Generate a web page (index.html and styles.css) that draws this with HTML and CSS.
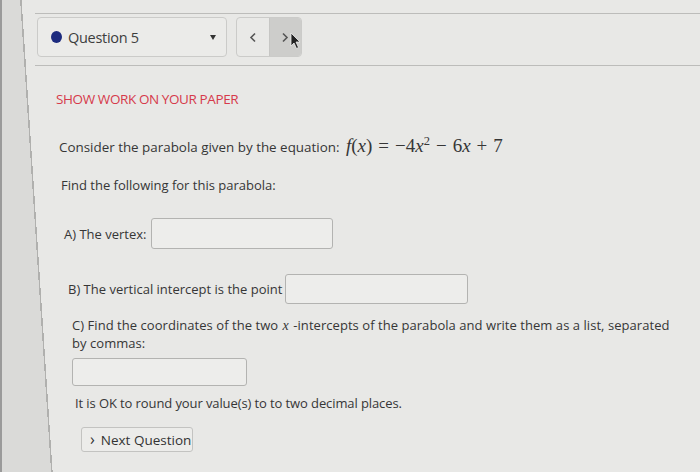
FILE: index.html
```html
<!DOCTYPE html>
<html>
<head>
<meta charset="utf-8">
<link rel="stylesheet" href="styles.css">
</head>
<body>
<div class="page">
  <div class="rule rule-top"></div>
  <div class="toolbar">
    <div class="select">
      <span class="dot"></span>
      <span class="qlabel">Question 5</span>
      <span class="caret"></span>
    </div>
    <div class="nav">
      <div class="navbtn">
        <svg width="8" height="11" viewBox="0 0 8 11"><path d="M6 1.5 L2 5.5 L6 9.5" fill="none" stroke="#555" stroke-width="1.6"/></svg>
      </div>
      <div class="navbtn hover">
        <svg width="8" height="11" viewBox="0 0 8 11"><path d="M2 1.5 L6 5.5 L2 9.5" fill="none" stroke="#555" stroke-width="1.6"/></svg>
        <svg class="cursor" width="12" height="18" viewBox="0 0 12 18"><path d="M1 1 L1 14 L4 11 L6.5 16.5 L8.5 15.5 L6 10 L10 10 Z" fill="#222" stroke="#eee" stroke-width="0.8"/></svg>
      </div>
    </div>
  </div>
  <div class="rule rule-mid"></div>

  <div class="content">
    <p class="warn">SHOW WORK ON YOUR PAPER</p>
    <p class="consider">Consider the parabola given by the equation: <span class="math"><i>f</i>(<i>x</i>)<span class="op">=</span>−4<i>x</i><sup>2</sup><span class="op">−</span>6<i>x</i><span class="op">+</span>7</span></p>
    <p class="find">Find the following for this parabola:</p>
    <div class="row row-a"><span>A) The vertex:</span><span class="input input-a"></span></div>
    <div class="row row-b"><span>B) The vertical intercept is the point</span><span class="input input-b"></span></div>
    <p class="partc">C) Find the coordinates of the two <i class="mx">x</i> -intercepts of the parabola and write them as a list, separated by commas:</p>
    <div class="row row-c"><span class="input input-c"></span></div>
    <p class="note">It is OK to round your value(s) to to two decimal places.</p>
    <div class="row row-btn"><button class="next"><span class="chev">›</span> Next Question</button></div>
  </div>
</div>
</body>
</html>
```
FILE: styles.css
```css
html, body {
  margin: 0;
  padding: 0;
}
body {
  width: 700px;
  height: 472px;
  overflow: hidden;
  font-family: "Open Sans", "Liberation Sans", sans-serif;
  color: #363636;
  background:
    linear-gradient(to right, #9a9a9a 0 2px, transparent 2px 6px),
    linear-gradient(86.24deg, #dadad8 0 51px, #b0b0ae 51px 52.5px, #e8e8e6 52.5px);
}
.page {
  position: relative;
  width: 700px;
  height: 472px;
}
.rule {
  height: 0;
  border-top: 1.5px solid #bcbcba;
  margin-left: 35px;
}
.rule-top {
  margin-top: 13px;
}
.toolbar {
  display: flex;
  gap: 9px;
  margin: 3px 0 0 37px;
  height: 40px;
}
.select {
  border: 1px solid #cbcbc9;
  border-radius: 4px;
  background: #ebebe9;
  display: flex;
  align-items: center;
  padding: 0 10px 0 13px;
  box-sizing: border-box;
  width: 190px;
}
.dot {
  width: 11px;
  height: 12px;
  border-radius: 50%;
  background: #1c2a7e;
  margin-right: 6px;
}
.qlabel {
  font-size: 14.5px;
  color: #3d3d3d;
  flex: 1;
  letter-spacing: -0.3px;
}
.caret {
  width: 0;
  height: 0;
  border-left: 3.5px solid transparent;
  border-right: 3.5px solid transparent;
  border-top: 5px solid #333;
}
.nav {
  display: flex;
  width: 64px;
  border: 1px solid #cbcbc9;
  border-radius: 4px;
  overflow: hidden;
  background: #e9e9e7;
}
.navbtn {
  flex: 1;
  display: flex;
  align-items: center;
  justify-content: center;
  position: relative;
}
.navbtn.hover {
  background: #cdcdcb;
  border-left: 1px solid #c6c6c4;
}
.cursor {
  position: absolute;
  left: 20px;
  top: 14px;
}
.rule-mid {
  margin-top: 8px;
}
.content {
  font-size: 13px;
}
.content p {
  margin: 0;
}
.warn {
  color: #d63a4b;
  margin-top: 23px !important;
  padding-left: 56px;
  line-height: 20px;
  letter-spacing: -0.4px;
  font-size: 13.5px;
}
.consider {
  margin-top: 25px !important;
  padding-left: 59px;
  line-height: 24px;
  font-size: 13.4px;
}
.math {
  font-family: "Liberation Serif", "DejaVu Serif", serif;
  font-size: 19px;
  margin-left: 3px;
}
.op {
  padding: 0 6px;
}
.math sup {
  font-size: 12.5px;
  line-height: 0;
}
.find {
  margin-top: 16px !important;
  padding-left: 61px;
  line-height: 20px;
}
.row {
  display: flex;
  align-items: center;
}
.row-a {
  margin-top: 23px;
  padding-left: 64px;
}
.row-b {
  margin-top: 25px;
  padding-left: 68px;
}
.input {
  display: block;
  border: 1px solid #b3b3b1;
  border-radius: 3px;
  background: #ededeb;
  box-sizing: border-box;
}
.input-a {
  width: 182px;
  height: 31px;
  margin-left: 4px;
}
.input-b {
  width: 183px;
  height: 30px;
  margin-left: 3px;
}
.partc {
  margin-top: 12px !important;
  padding-left: 72px;
  padding-right: 30px;
  line-height: 18px;
  font-size: 13px;
  letter-spacing: 0.05px;
}
.mx {
  display: inline-block;
  font-family: "Liberation Serif", "DejaVu Serif", serif;
  font-size: 14px;
  line-height: 14px;
  padding: 0 1px;
}
.row-c {
  margin-top: 6px;
  padding-left: 72px;
}
.input-c {
  width: 175px;
  height: 28px;
}
.note {
  margin-top: 7px !important;
  padding-left: 75px;
  line-height: 20px;
  letter-spacing: -0.1px;
}
.row-btn {
  margin-top: 14px;
  padding-left: 81px;
}
.next {
  width: 112px;
  height: 25px;
  border: 1px solid #c3c3c1;
  border-radius: 3px;
  background: #ececea;
  font-family: "Open Sans", "Liberation Sans", sans-serif;
  font-size: 13.5px;
  color: #333;
  padding: 0 0 0 8px;
  text-align: left;
  display: flex;
  align-items: center;
  gap: 6px;
}
.chev {
  font-size: 16px;
  line-height: 1;
  margin-top: -2px;
}
```
